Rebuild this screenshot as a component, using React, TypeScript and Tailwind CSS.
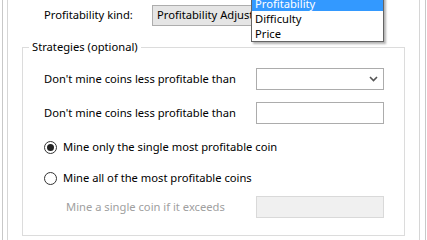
import React from 'react';

const font = { fontFamily: '"Noto Sans", "Open Sans", sans-serif' };

const Radio: React.FC<{ checked?: boolean; label: string }> = ({ checked, label }) => (
    <div className="flex items-center h-[16px]">
        <span className="w-[13px] h-[13px] rounded-full border border-[#333] bg-white flex items-center justify-center">
            {checked && <span className="w-[7px] h-[7px] rounded-full bg-[#222]" />}
        </span>
        <span className="ml-[6px] text-[11.2px] text-black">{label}</span>
    </div>
);

const App: React.FC = () => {
    return (
        <div className="w-[427px] h-[240px] bg-white relative overflow-hidden" style={font}>
            {/* window frame lines */}
            <div className="absolute left-[2px] top-0 bottom-0 w-px bg-[#c8c8c8]" />
            <div className="absolute left-[7px] top-0 bottom-0 w-px bg-[#d6d6d6]" />
            <div className="absolute left-[419px] top-0 bottom-0 w-px bg-[#d6d6d6]" />
            <div className="absolute left-[425px] top-0 bottom-0 w-px bg-[#c8c8c8]" />

            {/* Profitability kind row */}
            <div className="flex items-center pt-[5px] pl-[44px] h-[21px] box-content">
                <span className="text-[11.2px] text-black w-[108px]">Profitability kind:</span>
                <div className="w-[99px] h-[21px] border-y border-l border-[#adadad] bg-[#e5e5e5] flex items-center pl-[4px] overflow-hidden whitespace-nowrap">
                    <span className="text-[11.2px] text-black">Profitability Adjusted</span>
                </div>
            </div>

            {/* open dropdown list */}
            <div className="absolute left-[251px] top-[-4px] w-[133px] h-[46px] bg-white border border-[#646464] shadow-[2px_2px_2px_rgba(0,0,0,0.3)] text-[11.2px] leading-[15px]">
                <div className="bg-[#3399ff] text-white pl-[3px] h-[14px] leading-[14px]">Profitability</div>
                <div className="pl-[3px] text-black">Difficulty</div>
                <div className="pl-[3px] text-black">Price</div>
            </div>

            {/* Strategies group box */}
            <div className="absolute left-[22px] top-[47px] w-[383px] h-[189px] border border-[#dcdcdc]">
                <span className="absolute left-[6px] top-[-9px] bg-white px-[3px] text-[11.2px] leading-[16px] text-black">Strategies (optional)</span>
                <div className="flex flex-col pl-[21px] pt-[20px]">
                    <div className="flex items-center h-[22px]">
                        <span className="text-[11.2px] text-black w-[212px]">Don't mine coins less profitable than</span>
                        <div className="w-[128px] h-[22px] border border-[#acacac] bg-white flex items-center justify-end pr-[5px]">
                            <svg width="9" height="6" viewBox="0 0 9 6">
                                <path d="M1 1 L4.5 4.5 L8 1" fill="none" stroke="#555" strokeWidth="1.6" />
                            </svg>
                        </div>
                    </div>
                    <div className="flex items-center h-[22px] mt-[12px]">
                        <span className="text-[11.2px] text-black w-[212px]">Don't mine coins less profitable than</span>
                        <div className="w-[128px] h-[22px] border border-[#acacac] bg-white" />
                    </div>
                    <div className="mt-[15px]">
                        <Radio checked label="Mine only the single most profitable coin" />
                    </div>
                    <div className="mt-[15px]">
                        <Radio label="Mine all of the most profitable coins" />
                    </div>
                    <div className="flex items-center h-[22px] mt-[10px]">
                        <span className="text-[11.2px] text-[#a0a0a0] w-[212px] pl-[22px]">Mine a single coin if it exceeds</span>
                        <div className="w-[128px] h-[22px] border border-[#d9d9d9] bg-[#f0f0f0]" />
                    </div>
                </div>
            </div>
        </div>
    );
};

export default App;
